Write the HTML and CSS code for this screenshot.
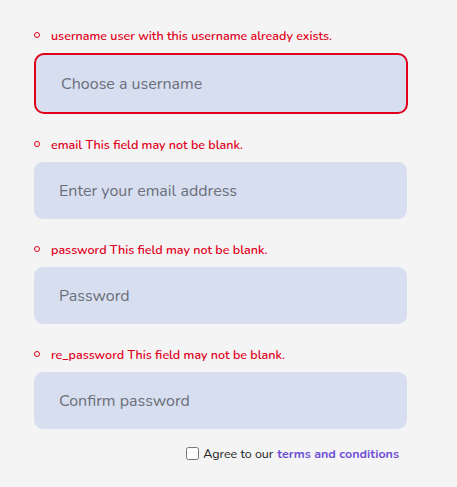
FILE: index.html
```html
<!DOCTYPE html>
<html>
<head>
<meta charset="utf-8">
<link rel="stylesheet" href="styles.css">
</head>
<body>
<form class="signup">
  <div class="field">
    <div class="error"><span class="dot"></span>username user with this username already exists.</div>
    <input class="input invalid" type="text" placeholder="Choose a username">
  </div>
  <div class="field">
    <div class="error"><span class="dot"></span>email This field may not be blank.</div>
    <input class="input" type="email" placeholder="Enter your email address">
  </div>
  <div class="field">
    <div class="error"><span class="dot"></span>password This field may not be blank.</div>
    <input class="input" type="password" placeholder="Password">
  </div>
  <div class="field">
    <div class="error"><span class="dot"></span>re_password This field may not be blank.</div>
    <input class="input" type="password" placeholder="Confirm password">
  </div>
  <label class="agree"><input type="checkbox" class="check"> Agree to our <a class="terms" href="#">terms and conditions</a></label>
</form>
</body>
</html>
```
FILE: styles.css
```css
html, body {
  margin: 0;
  background: #f4f4f4;
}
body {
  font-family: "Nunito", "Open Sans", sans-serif;
}
.signup {
  width: 374px;
  padding: 27px 0 0 34px;
  display: flex;
  flex-direction: column;
}
.field {
  display: flex;
  flex-direction: column;
  margin-bottom: 22px;
}
.error {
  display: flex;
  align-items: center;
  height: 16px;
  font-size: 12.5px;
  font-weight: 600;
  color: #e0001b;
  margin-bottom: 10px;
}
.dot {
  width: 4px;
  height: 4px;
  border: 1px solid #e0001b;
  border-radius: 50%;
  margin: 0 11px 0 0;
}
.input {
  box-sizing: border-box;
  height: 57px;
  width: 373px;
  border: none;
  border-radius: 9px;
  background: #d7def0;
  padding: 0 25px;
  font-family: inherit;
  font-size: 16px;
  color: #333;
  outline: none;
}
.input::placeholder {
  color: #6b6f7a;
}
.input.invalid {
  height: 61px;
  width: 374px;
  border: 2px solid #e0001b;
  border-radius: 10px;
  padding-left: 25px;
}
.agree {
  align-self: flex-end;
  margin: -6px 9px 0 0;
  display: flex;
  align-items: center;
  font-size: 12.5px;
  color: #222;
}
.check {
  margin: 0 4px 0 0;
  width: 13px;
  height: 13px;
}
.terms {
  color: #6f4fd8;
  font-weight: 700;
  text-decoration: none;
  margin-left: 4px;
}
```
